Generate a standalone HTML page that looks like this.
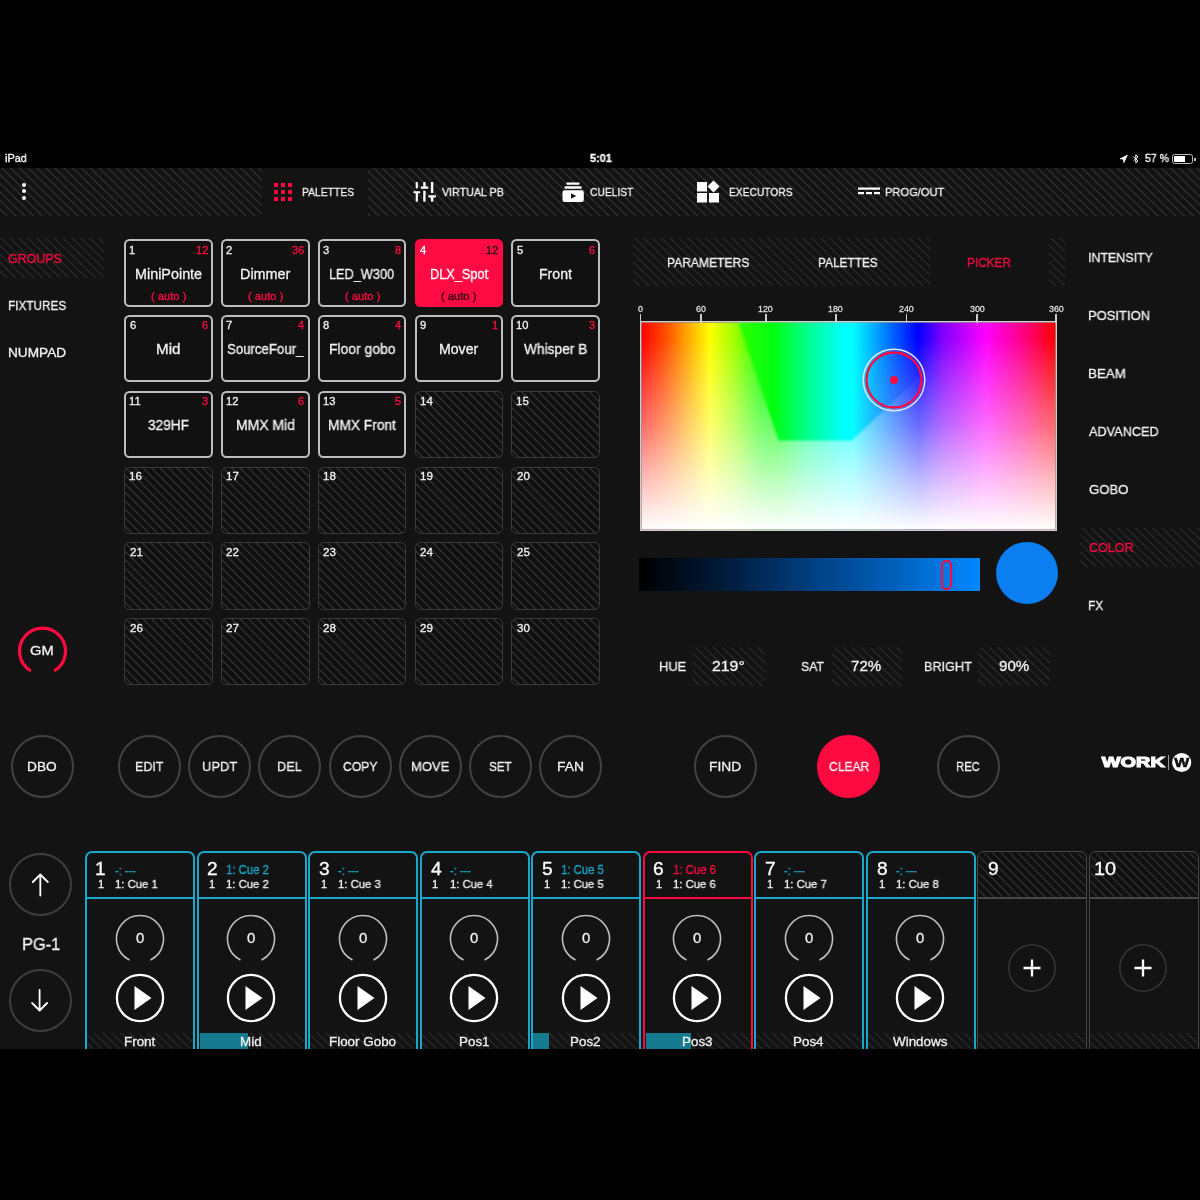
<!DOCTYPE html><html><head><meta charset='utf-8'><style>
*{margin:0;padding:0;box-sizing:border-box}
html,body{width:1200px;height:1200px;background:#000;overflow:hidden;font-family:"Liberation Sans",sans-serif;color:#eee}
.a{position:absolute}
.t{position:absolute;white-space:nowrap;line-height:1;transform-origin:0 0;will-change:transform;-webkit-text-stroke:0.3px currentColor}
.st{background:repeating-linear-gradient(44deg, #131313 0px, #131313 3.75px, #323232 4.95px, #131313 6.15px)}
.st2{background:repeating-linear-gradient(44deg, #131313 0px, #131313 3.75px, #2b2b2b 4.95px, #131313 6.15px)}
.cell{position:absolute;width:88.6px;height:67.3px;border:2px solid #bdbdbd;border-radius:5.5px;background:#111}
.ecell{position:absolute;width:88.6px;height:67.3px;border:1.5px solid #3a3a3a;border-radius:5.5px;background:repeating-linear-gradient(45deg, #101010 0px, #101010 3.60px, #363636 4.80px, #101010 6.00px)}
.btn{position:absolute;width:63px;height:63px;border:2px solid #424242;border-radius:50%}
.pb{position:absolute;top:851px;width:110px;height:220px;border:2px solid #18a8cc;border-radius:7px;overflow:hidden}
</style></head><body>
<div class="a" style="left:0;top:216px;width:1200px;height:833px;background:#131313"></div>
<div class="t" style="left:5.06px;top:153.25px;font-size:10.95px;color:#fff;transform:scaleX(0.9878)">iPad</div>
<div class="t" style="left:590.41px;top:153.19px;font-size:11.3px;color:#fff;font-weight:700;transform:scaleX(0.9680)">5:01</div>
<div class="t" style="left:1145.33px;top:153.19px;font-size:11.3px;color:#fff;transform:scaleX(0.9317)">57 %</div>
<svg class="a" style="left:1119px;top:154px" width="10" height="10"><path d="M1 4.8 L8.5 1 L4.8 8.8 L4.3 5.3 Z" fill="#fff" stroke="#fff" stroke-width="0.6" stroke-linejoin="round"/></svg>
<svg class="a" style="left:1132px;top:154px" width="9" height="10"><path d="M1.5 2.8 L6 6.8 L3.8 8.8 V0.8 L6 2.8 L1.5 6.8" fill="none" stroke="#fff" stroke-width="1"/></svg>
<div class="a" style="left:1172px;top:154px;width:21px;height:10px;border:1px solid #bbb;border-radius:2.5px"></div>
<div class="a" style="left:1174px;top:156px;width:10.5px;height:6px;background:#fff"></div>
<div class="a" style="left:1194px;top:157.5px;width:1.5px;height:3px;background:#bbb"></div>
<div class="a st" style="left:0;top:168px;width:1200px;height:48px"></div>
<div class="a" style="left:262px;top:168px;width:106px;height:48px;background:#131313"></div>
<div class="a" style="left:21.5px;top:182.5px;width:4px;height:4px;border-radius:50%;background:#fff"></div>
<div class="a" style="left:21.5px;top:189.4px;width:4px;height:4px;border-radius:50%;background:#fff"></div>
<div class="a" style="left:21.5px;top:196.3px;width:4px;height:4px;border-radius:50%;background:#fff"></div>
<div class="a" style="left:274px;top:182.5px;width:4px;height:4px;background:#ff0a40"></div>
<div class="a" style="left:281px;top:182.5px;width:4px;height:4px;background:#ff0a40"></div>
<div class="a" style="left:288px;top:182.5px;width:4px;height:4px;background:#ff0a40"></div>
<div class="a" style="left:274px;top:189.5px;width:4px;height:4px;background:#ff0a40"></div>
<div class="a" style="left:281px;top:189.5px;width:4px;height:4px;background:#ff0a40"></div>
<div class="a" style="left:288px;top:189.5px;width:4px;height:4px;background:#ff0a40"></div>
<div class="a" style="left:274px;top:196.5px;width:4px;height:4px;background:#ff0a40"></div>
<div class="a" style="left:281px;top:196.5px;width:4px;height:4px;background:#ff0a40"></div>
<div class="a" style="left:288px;top:196.5px;width:4px;height:4px;background:#ff0a40"></div>
<div class="t" style="left:301.92px;top:185.72px;font-size:11.72px;color:#f2f2f2;transform:scaleX(0.8817)">PALETTES</div>
<svg class="a" style="left:408px;top:178px" width="32" height="28"><g fill="#fff"><rect x="7.7" y="3.9" width="2.2" height="6.6" rx="0.7"/><rect x="5.3" y="13.2" width="7" height="2.1" rx="0.7"/><rect x="7.7" y="14.5" width="2.2" height="9.2" rx="0.7"/><rect x="15.2" y="4" width="2.4" height="6" rx="0.7"/><rect x="12.8" y="8.5" width="7.5" height="2.2" rx="0.7"/><rect x="15.2" y="12.8" width="2.4" height="10.9" rx="0.7"/><rect x="22.9" y="4" width="2.4" height="10.9" rx="0.7"/><rect x="20.3" y="17.3" width="7.7" height="2.2" rx="0.7"/><rect x="22.9" y="18.5" width="2.4" height="5.2" rx="0.7"/></g></svg>
<div class="t" style="left:442.41px;top:185.72px;font-size:11.72px;color:#f2f2f2;transform:scaleX(0.9126)">VIRTUAL PB</div>
<svg class="a" style="left:560px;top:180px" width="26" height="24"><g fill="#fff"><rect x="6.3" y="2.5" width="13.4" height="2.2" rx="1.1"/><rect x="4.5" y="6.3" width="17.2" height="2.4" rx="1.2"/><rect x="2.5" y="10.3" width="21.3" height="11.7" rx="2"/></g><path d="M11 13.2 L16.3 16 L11 18.8 Z" fill="#141414"/></svg>
<div class="t" style="left:590.18px;top:185.72px;font-size:11.72px;color:#f2f2f2;transform:scaleX(0.8745)">CUELIST</div>
<svg class="a" style="left:696px;top:180px" width="26" height="24"><g fill="#fff"><rect x="1" y="2" width="10" height="9.5"/><rect x="1" y="13" width="10" height="9.5"/><rect x="13" y="13" width="10" height="9.5"/><rect x="13.2" y="2.2" width="8.5" height="8.5" transform="rotate(45 17.5 6.5)"/></g></svg>
<div class="t" style="left:728.83px;top:185.72px;font-size:11.72px;color:#f2f2f2;transform:scaleX(0.8722)">EXECUTORS</div>
<svg class="a" style="left:858px;top:186px" width="24" height="10"><g fill="#fff"><rect x="0" y="1.5" width="22" height="2.2"/><rect x="0" y="6" width="6" height="2.2"/><rect x="8" y="6" width="6" height="2.2"/><rect x="16" y="6" width="6" height="2.2"/></g></svg>
<div class="t" style="left:885.05px;top:185.72px;font-size:11.72px;color:#f2f2f2;transform:scaleX(0.9477)">PROG/OUT</div>
<div class="a st2" style="left:0;top:238px;width:104px;height:40px"></div>
<div class="t" style="left:8.44px;top:251.60px;font-size:13.14px;color:#ff0a40;transform:scaleX(0.9406)">GROUPS</div>
<div class="t" style="left:8.31px;top:298.90px;font-size:13.14px;color:#f2f2f2;transform:scaleX(0.8957)">FIXTURES</div>
<div class="t" style="left:8.16px;top:346.20px;font-size:13.14px;color:#f2f2f2;transform:scaleX(1.0387)">NUMPAD</div>
<div class="cell" style="left:124.30px;top:239.30px"></div>
<div class="t" style="left:129.40px;top:244.51px;font-size:11.16px;color:#f2f2f2">1</div>
<div class="t" style="left:195.60px;top:244.54px;font-size:11.02px;color:#ff0a40">12</div>
<div class="t" style="left:134.98px;top:266.64px;font-size:14.12px;color:#f2f2f2;transform:scaleX(1.0187)">MiniPointe</div>
<div class="t" style="left:151.09px;top:292.17px;font-size:10.17px;color:#ff0a40;transform:scaleX(1.1000)">( auto )</div>
<div class="cell" style="left:221.05px;top:239.30px"></div>
<div class="t" style="left:226.35px;top:244.51px;font-size:11.16px;color:#f2f2f2">2</div>
<div class="t" style="left:292.25px;top:244.54px;font-size:11.02px;color:#ff0a40">36</div>
<div class="t" style="left:239.93px;top:266.64px;font-size:14.12px;color:#f2f2f2;transform:scaleX(1.0187)">Dimmer</div>
<div class="t" style="left:247.84px;top:292.17px;font-size:10.17px;color:#ff0a40;transform:scaleX(1.1000)">( auto )</div>
<div class="cell" style="left:317.80px;top:239.30px"></div>
<div class="t" style="left:323.30px;top:244.51px;font-size:11.16px;color:#f2f2f2">3</div>
<div class="t" style="left:395.10px;top:244.54px;font-size:11.02px;color:#ff0a40">8</div>
<div class="t" style="left:329.43px;top:266.64px;font-size:14.12px;color:#f2f2f2;transform:scaleX(0.9030)">LED_W300</div>
<div class="t" style="left:344.59px;top:292.17px;font-size:10.17px;color:#ff0a40;transform:scaleX(1.1000)">( auto )</div>
<div class="cell" style="left:414.55px;top:239.30px;background:#ff0a42;border-color:#ff0a42"></div>
<div class="t" style="left:420.25px;top:244.51px;font-size:11.16px;color:#fff">4</div>
<div class="t" style="left:485.85px;top:244.54px;font-size:11.02px;color:#1a1a1a">12</div>
<div class="t" style="left:429.56px;top:266.64px;font-size:14.12px;color:#fff;transform:scaleX(0.9019)">DLX_Spot</div>
<div class="t" style="left:441.34px;top:292.17px;font-size:10.17px;color:#2a0a10;transform:scaleX(1.1000)">( auto )</div>
<div class="cell" style="left:511.30px;top:239.30px"></div>
<div class="t" style="left:516.70px;top:244.51px;font-size:11.16px;color:#f2f2f2">5</div>
<div class="t" style="left:588.60px;top:244.54px;font-size:11.02px;color:#ff0a40">6</div>
<div class="t" style="left:538.83px;top:266.64px;font-size:14.12px;color:#f2f2f2">Front</div>
<div class="cell" style="left:124.30px;top:315.05px"></div>
<div class="t" style="left:129.60px;top:320.26px;font-size:11.16px;color:#f2f2f2">6</div>
<div class="t" style="left:201.60px;top:320.29px;font-size:11.02px;color:#ff0a40">6</div>
<div class="t" style="left:156.49px;top:342.39px;font-size:14.12px;color:#f2f2f2;transform:scaleX(1.0749)">Mid</div>
<div class="cell" style="left:221.05px;top:315.05px"></div>
<div class="t" style="left:226.35px;top:320.26px;font-size:11.16px;color:#f2f2f2">7</div>
<div class="t" style="left:298.25px;top:320.29px;font-size:11.02px;color:#ff0a40">4</div>
<div class="t" style="left:226.89px;top:342.39px;font-size:14.12px;color:#f2f2f2;transform:scaleX(0.9371)">SourceFour_</div>
<div class="cell" style="left:317.80px;top:315.05px"></div>
<div class="t" style="left:323.20px;top:320.26px;font-size:11.16px;color:#f2f2f2">8</div>
<div class="t" style="left:395.00px;top:320.29px;font-size:11.02px;color:#ff0a40">4</div>
<div class="t" style="left:328.71px;top:342.39px;font-size:14.12px;color:#f2f2f2;transform:scaleX(0.9878)">Floor gobo</div>
<div class="cell" style="left:414.55px;top:315.05px"></div>
<div class="t" style="left:419.95px;top:320.26px;font-size:11.16px;color:#f2f2f2">9</div>
<div class="t" style="left:491.95px;top:320.29px;font-size:11.02px;color:#ff0a40">1</div>
<div class="t" style="left:439.21px;top:342.39px;font-size:14.12px;color:#f2f2f2;transform:scaleX(0.9894)">Mover</div>
<div class="cell" style="left:511.30px;top:315.05px"></div>
<div class="t" style="left:516.40px;top:320.26px;font-size:11.16px;color:#f2f2f2">10</div>
<div class="t" style="left:588.60px;top:320.29px;font-size:11.02px;color:#ff0a40">3</div>
<div class="t" style="left:524.45px;top:342.39px;font-size:14.12px;color:#f2f2f2;transform:scaleX(0.9720)">Whisper B</div>
<div class="cell" style="left:124.30px;top:390.80px"></div>
<div class="t" style="left:129.40px;top:396.01px;font-size:11.16px;color:#f2f2f2">11</div>
<div class="t" style="left:201.60px;top:396.04px;font-size:11.02px;color:#ff0a40">3</div>
<div class="t" style="left:148.32px;top:418.14px;font-size:14.12px;color:#f2f2f2;transform:scaleX(0.9685)">329HF</div>
<div class="cell" style="left:221.05px;top:390.80px"></div>
<div class="t" style="left:226.15px;top:396.01px;font-size:11.16px;color:#f2f2f2">12</div>
<div class="t" style="left:298.35px;top:396.04px;font-size:11.02px;color:#ff0a40">6</div>
<div class="t" style="left:235.96px;top:418.14px;font-size:14.12px;color:#f2f2f2;transform:scaleX(0.9896)">MMX Mid</div>
<div class="cell" style="left:317.80px;top:390.80px"></div>
<div class="t" style="left:322.90px;top:396.01px;font-size:11.16px;color:#f2f2f2">13</div>
<div class="t" style="left:395.10px;top:396.04px;font-size:11.02px;color:#ff0a40">5</div>
<div class="t" style="left:327.85px;top:418.14px;font-size:14.12px;color:#f2f2f2;transform:scaleX(0.9730)">MMX Front</div>
<div class="ecell" style="left:414.55px;top:390.80px"></div>
<div class="t" style="left:419.55px;top:395.55px;font-size:11.58px;color:#f2f2f2">14</div>
<div class="ecell" style="left:511.30px;top:390.80px"></div>
<div class="t" style="left:516.30px;top:395.55px;font-size:11.58px;color:#f2f2f2">15</div>
<div class="ecell" style="left:124.30px;top:466.55px"></div>
<div class="t" style="left:129.30px;top:471.30px;font-size:11.58px;color:#f2f2f2">16</div>
<div class="ecell" style="left:221.05px;top:466.55px"></div>
<div class="t" style="left:226.05px;top:471.30px;font-size:11.58px;color:#f2f2f2">17</div>
<div class="ecell" style="left:317.80px;top:466.55px"></div>
<div class="t" style="left:322.80px;top:471.30px;font-size:11.58px;color:#f2f2f2">18</div>
<div class="ecell" style="left:414.55px;top:466.55px"></div>
<div class="t" style="left:419.55px;top:471.30px;font-size:11.58px;color:#f2f2f2">19</div>
<div class="ecell" style="left:511.30px;top:466.55px"></div>
<div class="t" style="left:516.60px;top:471.30px;font-size:11.58px;color:#f2f2f2">20</div>
<div class="ecell" style="left:124.30px;top:542.30px"></div>
<div class="t" style="left:129.60px;top:547.05px;font-size:11.58px;color:#f2f2f2">21</div>
<div class="ecell" style="left:221.05px;top:542.30px"></div>
<div class="t" style="left:226.35px;top:547.05px;font-size:11.58px;color:#f2f2f2">22</div>
<div class="ecell" style="left:317.80px;top:542.30px"></div>
<div class="t" style="left:323.10px;top:547.05px;font-size:11.58px;color:#f2f2f2">23</div>
<div class="ecell" style="left:414.55px;top:542.30px"></div>
<div class="t" style="left:419.85px;top:547.05px;font-size:11.58px;color:#f2f2f2">24</div>
<div class="ecell" style="left:511.30px;top:542.30px"></div>
<div class="t" style="left:516.60px;top:547.05px;font-size:11.58px;color:#f2f2f2">25</div>
<div class="ecell" style="left:124.30px;top:618.05px"></div>
<div class="t" style="left:129.60px;top:622.80px;font-size:11.58px;color:#f2f2f2">26</div>
<div class="ecell" style="left:221.05px;top:618.05px"></div>
<div class="t" style="left:226.35px;top:622.80px;font-size:11.58px;color:#f2f2f2">27</div>
<div class="ecell" style="left:317.80px;top:618.05px"></div>
<div class="t" style="left:323.10px;top:622.80px;font-size:11.58px;color:#f2f2f2">28</div>
<div class="ecell" style="left:414.55px;top:618.05px"></div>
<div class="t" style="left:419.85px;top:622.80px;font-size:11.58px;color:#f2f2f2">29</div>
<div class="ecell" style="left:511.30px;top:618.05px"></div>
<div class="t" style="left:516.70px;top:622.80px;font-size:11.58px;color:#f2f2f2">30</div>
<svg class="a" style="left:0;top:600px" width="90" height="90"><path d="M 30.8 70.9 A 23 23 0 1 1 54.2 70.9" fill="none" stroke="#ff0a40" stroke-width="3.2"/></svg>
<div class="t" style="left:30.38px;top:644.35px;font-size:13.42px;color:#f2f2f2;transform:scaleX(1.0960)">GM</div>
<div class="a st2" style="left:632.5px;top:238px;width:432.5px;height:48px"></div>
<div class="a" style="left:929.5px;top:238px;width:119.5px;height:48px;background:#131313"></div>
<div class="t" style="left:666.61px;top:255.85px;font-size:13.42px;color:#f2f2f2;transform:scaleX(0.9008)">PARAMETERS</div>
<div class="t" style="left:818.33px;top:255.85px;font-size:13.42px;color:#f2f2f2;transform:scaleX(0.8847)">PALETTES</div>
<div class="t" style="left:967.03px;top:255.85px;font-size:13.42px;color:#ff0a40;transform:scaleX(0.8817)">PICKER</div>
<div class="a" style="left:639.75px;top:314px;width:1.5px;height:9px;background:#ccc"></div>
<div class="t" style="left:638.05px;top:305.08px;font-size:8.9px;color:#ddd">0</div>
<div class="a" style="left:700.25px;top:314px;width:1.5px;height:9px;background:#ccc"></div>
<div class="t" style="left:696.00px;top:305.08px;font-size:8.9px;color:#ddd">60</div>
<div class="a" style="left:765.25px;top:314px;width:1.5px;height:9px;background:#ccc"></div>
<div class="t" style="left:758.40px;top:305.08px;font-size:8.9px;color:#ddd">120</div>
<div class="a" style="left:835.25px;top:314px;width:1.5px;height:9px;background:#ccc"></div>
<div class="t" style="left:828.40px;top:305.08px;font-size:8.9px;color:#ddd">180</div>
<div class="a" style="left:905.85px;top:314px;width:1.5px;height:9px;background:#ccc"></div>
<div class="t" style="left:899.15px;top:305.08px;font-size:8.9px;color:#ddd">240</div>
<div class="a" style="left:976.45px;top:314px;width:1.5px;height:9px;background:#ccc"></div>
<div class="t" style="left:969.80px;top:305.08px;font-size:8.9px;color:#ddd">300</div>
<div class="a" style="left:1055.25px;top:314px;width:1.5px;height:9px;background:#ccc"></div>
<div class="t" style="left:1048.60px;top:305.08px;font-size:8.9px;color:#ddd">360</div>
<svg class="a" style="left:630px;top:310px" width="440" height="230"><defs><linearGradient id="hue" gradientUnits="userSpaceOnUse" x1="11.5" y1="0" x2="425.5" y2="0"><stop offset="0%" stop-color="#ff0000"/><stop offset="5.9%" stop-color="#ff5000"/><stop offset="16.5%" stop-color="#ffff00"/><stop offset="22.8%" stop-color="#99ff00"/><stop offset="29%" stop-color="#10ff00"/><stop offset="33%" stop-color="#00ff00"/><stop offset="39.7%" stop-color="#00ff88"/><stop offset="49%" stop-color="#00ffff"/><stop offset="51%" stop-color="#00ffff"/><stop offset="66.8%" stop-color="#0000ff"/><stop offset="72.8%" stop-color="#8000ff"/><stop offset="83.2%" stop-color="#ff00ff"/><stop offset="92.5%" stop-color="#ff0080"/><stop offset="100%" stop-color="#ff0000"/></linearGradient><linearGradient id="hue2" gradientUnits="userSpaceOnUse" x1="11.5" y1="0" x2="425.5" y2="0"><stop offset="0%" stop-color="#ff0000"/><stop offset="5.9%" stop-color="#ff5000"/><stop offset="16.5%" stop-color="#ffff00"/><stop offset="23.4%" stop-color="#a0ff00"/><stop offset="23.8%" stop-color="#30ff00"/><stop offset="32%" stop-color="#00ff10"/><stop offset="39.7%" stop-color="#00ff88"/><stop offset="49%" stop-color="#00ffff"/><stop offset="51%" stop-color="#00ffff"/><stop offset="66.8%" stop-color="#0000ff"/><stop offset="72.8%" stop-color="#8000ff"/><stop offset="83.2%" stop-color="#ff00ff"/><stop offset="92.5%" stop-color="#ff0080"/><stop offset="100%" stop-color="#ff0000"/></linearGradient><linearGradient id="wht" x1="0" y1="0" x2="0" y2="1"><stop offset="0%" stop-color="#fff" stop-opacity="0"/><stop offset="8%" stop-color="#fff" stop-opacity="0"/><stop offset="50%" stop-color="#fff" stop-opacity="0.42"/><stop offset="75%" stop-color="#fff" stop-opacity="0.72"/><stop offset="100%" stop-color="#fff" stop-opacity="1"/></linearGradient><filter id="bl" x="-5%" y="-5%" width="110%" height="110%"><feGaussianBlur stdDeviation="0.8"/></filter><linearGradient id="mg" gradientUnits="userSpaceOnUse" x1="218" y1="0" x2="295" y2="0"><stop offset="0" stop-color="#fff"/><stop offset="1" stop-color="#000"/></linearGradient><mask id="mk" maskUnits="userSpaceOnUse" x="0" y="0" width="440" height="230"><rect x="0" y="0" width="440" height="230" fill="url(#mg)"/></mask></defs><rect x="11.5" y="12.5" width="414.0" height="207.0" fill="url(#hue)"/><rect x="11.5" y="12.5" width="414.0" height="207.0" fill="url(#wht)"/><path d="M108.70000000000005 12.5 L305 12.5 L305 52 L222 130.5 L148.70000000000005 130.5 Z" fill="url(#hue2)" filter="url(#bl)" mask="url(#mk)"/><rect x="10.75" y="11.75" width="415.5" height="208.5" fill="none" stroke="#cfcfcf" stroke-width="1.5"/></svg>
<svg class="a" style="left:861.7px;top:347.7px" width="64" height="64"><circle cx="32" cy="32" r="30.8" fill="none" stroke="#e2e8ff" stroke-width="1.4"/><circle cx="32" cy="32" r="27.5" fill="none" stroke="#ff0a40" stroke-width="2.3"/><circle cx="32" cy="32" r="4" fill="#ff0a40"/></svg>
<div class="a" style="left:639px;top:558px;width:341px;height:33px;background:linear-gradient(to right,#000 0%,#001b3a 25%,#003e7e 50%,#0060bc 75%,#0088ff 100%)"></div>
<div class="a" style="left:940.5px;top:559.5px;width:11.5px;height:30px;border:2px solid #ff0a40;border-radius:5px"></div>
<div class="a" style="left:996px;top:542px;width:62px;height:62px;border-radius:50%;background:#0b7ef0"></div>
<div class="a st2" style="left:692.5px;top:646.5px;width:72px;height:39px"></div>
<div class="t" style="left:658.54px;top:660.05px;font-size:13.42px;color:#f2f2f2;transform:scaleX(0.9625)">HUE</div>
<div class="t" style="left:711.55px;top:659.25px;font-size:14.69px;color:#f2f2f2;transform:scaleX(1.0764)">219°</div>
<div class="a st2" style="left:831.8px;top:646.5px;width:70px;height:39px"></div>
<div class="t" style="left:801.15px;top:660.05px;font-size:13.42px;color:#f2f2f2;transform:scaleX(0.9132)">SAT</div>
<div class="t" style="left:851.08px;top:659.25px;font-size:14.69px;color:#f2f2f2;transform:scaleX(1.0284)">72%</div>
<div class="a st2" style="left:977.8px;top:646.5px;width:72px;height:39px"></div>
<div class="t" style="left:924.26px;top:660.05px;font-size:13.42px;color:#f2f2f2;transform:scaleX(0.9432)">BRIGHT</div>
<div class="t" style="left:998.78px;top:659.25px;font-size:14.69px;color:#f2f2f2;transform:scaleX(1.0284)">90%</div>
<div class="a st2" style="left:1080px;top:528px;width:120px;height:39px"></div>
<div class="t" style="left:1088.20px;top:251.13px;font-size:13.56px;color:#f2f2f2;transform:scaleX(0.9163)">INTENSITY</div>
<div class="t" style="left:1088.25px;top:309.13px;font-size:13.56px;color:#f2f2f2;transform:scaleX(0.9585)">POSITION</div>
<div class="t" style="left:1088.22px;top:367.13px;font-size:13.56px;color:#f2f2f2;transform:scaleX(0.9862)">BEAM</div>
<div class="t" style="left:1089.21px;top:425.13px;font-size:13.56px;color:#f2f2f2;transform:scaleX(0.9375)">ADVANCED</div>
<div class="t" style="left:1088.62px;top:483.13px;font-size:13.56px;color:#f2f2f2;transform:scaleX(0.9721)">GOBO</div>
<div class="t" style="left:1088.65px;top:541.13px;font-size:13.56px;color:#ff0a40;transform:scaleX(0.9252)">COLOR</div>
<div class="t" style="left:1088.33px;top:599.13px;font-size:13.56px;color:#f2f2f2;transform:scaleX(0.8805)">FX</div>
<div class="btn" style="left:10.50px;top:734.5px"></div>
<div class="t" style="left:26.90px;top:759.61px;font-size:13.7px;color:#f2f2f2">DBO</div>
<div class="btn" style="left:118.00px;top:734.5px"></div>
<div class="t" style="left:134.90px;top:759.61px;font-size:13.7px;color:#f2f2f2;transform:scaleX(0.9128)">EDIT</div>
<div class="btn" style="left:188.20px;top:734.5px"></div>
<div class="t" style="left:201.76px;top:759.61px;font-size:13.7px;color:#f2f2f2;transform:scaleX(0.9444)">UPDT</div>
<div class="btn" style="left:258.40px;top:734.5px"></div>
<div class="t" style="left:277.23px;top:759.61px;font-size:13.7px;color:#f2f2f2;transform:scaleX(0.9283)">DEL</div>
<div class="btn" style="left:328.60px;top:734.5px"></div>
<div class="t" style="left:342.73px;top:759.61px;font-size:13.7px;color:#f2f2f2;transform:scaleX(0.8862)">COPY</div>
<div class="btn" style="left:398.80px;top:734.5px"></div>
<div class="t" style="left:410.88px;top:759.61px;font-size:13.7px;color:#f2f2f2;transform:scaleX(0.9496)">MOVE</div>
<div class="btn" style="left:469.00px;top:734.5px"></div>
<div class="t" style="left:489.12px;top:759.61px;font-size:13.7px;color:#f2f2f2;transform:scaleX(0.8463)">SET</div>
<div class="btn" style="left:539.20px;top:734.5px"></div>
<div class="t" style="left:557.21px;top:759.61px;font-size:13.7px;color:#f2f2f2;transform:scaleX(1.0143)">FAN</div>
<div class="btn" style="left:694.00px;top:734.5px"></div>
<div class="t" style="left:709.19px;top:759.61px;font-size:13.7px;color:#f2f2f2;transform:scaleX(1.0066)">FIND</div>
<div class="btn" style="left:817.30px;top:734.5px;background:#ff0a40;border-color:#ff0a40"></div>
<div class="t" style="left:828.68px;top:759.61px;font-size:13.7px;color:#f2f2f2;transform:scaleX(0.8804)">CLEAR</div>
<div class="btn" style="left:936.50px;top:734.5px"></div>
<div class="t" style="left:955.84px;top:759.61px;font-size:13.7px;color:#f2f2f2;transform:scaleX(0.8242)">REC</div>
<div class="a" style="left:1101px;top:754.2px;width:65px;height:14px;overflow:visible"><svg width="66" height="16" style="position:absolute;left:0;top:0;will-change:transform"><text x="0.8" y="13.2" font-family="Liberation Sans" font-weight="700" font-size="14.6" fill="#fff" stroke="#fff" stroke-width="1.1" textLength="63" lengthAdjust="spacingAndGlyphs">WORK</text></svg></div>
<div class="a" style="left:1167.6px;top:755px;width:1.4px;height:15px;background:#9a9a9a"></div>
<svg class="a" style="left:1170px;top:751px;will-change:transform" width="24" height="24"><circle cx="11.7" cy="11.5" r="9.6" fill="#fff"/><text x="11.7" y="16.2" text-anchor="middle" font-family="Liberation Sans" font-weight="700" font-size="13.5" fill="#111" stroke="#111" stroke-width="0.6" textLength="15" lengthAdjust="spacingAndGlyphs">W</text></svg>
<div class="a" style="left:8.5px;top:852.5px;width:63px;height:63px;border:2px solid #3e3e3e;border-radius:50%"></div>
<div class="a" style="left:8.5px;top:969.0px;width:63px;height:63px;border:2px solid #3e3e3e;border-radius:50%"></div>
<svg class="a" style="left:0;top:850px" width="80" height="190"><g fill="none" stroke="#fff" stroke-width="1.8" stroke-linecap="round" stroke-linejoin="round"><path d="M40.3 25.5 V45.5 M32.8 32 L40.3 24.5 L47.8 32"/><path d="M39.6 140 V159.5 M32.1 153 L39.6 160.5 L47.1 153"/></g></svg>
<div class="t" style="left:22.00px;top:936.79px;font-size:16.95px;color:#f2f2f2;transform:scaleX(0.9678)">PG-1</div>
<div class="pb" style="left:85.20px;border-color:#18a8cc"></div>
<div class="a" style="left:85.20px;top:897.2px;width:110px;height:2.2px;background:#18a8cc"></div>
<div class="a st2" style="left:87.20px;top:1032.5px;width:106px;height:17px"></div>
<div class="t" style="left:95.20px;top:858.93px;font-size:19.21px;color:#fff">1</div>
<div class="t" style="left:115.25px;top:865.01px;font-size:12.43px;color:#18a8cc;transform:scaleX(0.8929)">-: ---</div>
<div class="t" style="left:97.90px;top:879.31px;font-size:11.16px;color:#f2f2f2">1</div>
<div class="t" style="left:114.91px;top:879.17px;font-size:11.44px;color:#f2f2f2;transform:scaleX(0.9880)">1: Cue 1</div>
<svg class="a" style="left:113.70px;top:912.8px" width="52" height="52"><path d="M 15.5 47 A 23.5 23.5 0 1 1 36.5 47" fill="none" stroke="#bdbdbd" stroke-width="1.6"/></svg>
<div class="t" style="left:135.61px;top:931.20px;font-size:14.97px;color:#f2f2f2;transform:scaleX(0.9859)">0</div>
<svg class="a" style="left:113.70px;top:972.3px" width="52" height="52"><circle cx="26" cy="26" r="23.1" fill="none" stroke="#fff" stroke-width="2.3"/><path d="M20.5 14 L37.5 26 L20.5 38 Z" fill="#fff"/></svg>
<div class="t" style="left:123.55px;top:1035.15px;font-size:13.42px;color:#f2f2f2">Front</div>
<div class="pb" style="left:196.73px;border-color:#18a8cc"></div>
<div class="a" style="left:196.73px;top:897.2px;width:110px;height:2.2px;background:#18a8cc"></div>
<div class="a st2" style="left:198.73px;top:1032.5px;width:106px;height:17px"></div>
<div class="a" style="left:199.5px;top:1032.5px;width:48.0px;height:17px;background:#167a8e"></div>
<div class="t" style="left:207.23px;top:858.93px;font-size:19.21px;color:#fff">2</div>
<div class="t" style="left:226.41px;top:863.61px;font-size:12.43px;color:#18a8cc;transform:scaleX(0.9143)">1: Cue 2</div>
<div class="t" style="left:209.43px;top:879.31px;font-size:11.16px;color:#f2f2f2">1</div>
<div class="t" style="left:226.44px;top:879.17px;font-size:11.44px;color:#f2f2f2;transform:scaleX(0.9880)">1: Cue 2</div>
<svg class="a" style="left:225.23px;top:912.8px" width="52" height="52"><path d="M 15.5 47 A 23.5 23.5 0 1 1 36.5 47" fill="none" stroke="#bdbdbd" stroke-width="1.6"/></svg>
<div class="t" style="left:247.14px;top:931.20px;font-size:14.97px;color:#f2f2f2;transform:scaleX(0.9859)">0</div>
<svg class="a" style="left:225.23px;top:972.3px" width="52" height="52"><circle cx="26" cy="26" r="23.1" fill="none" stroke="#fff" stroke-width="2.3"/><path d="M20.5 14 L37.5 26 L20.5 38 Z" fill="#fff"/></svg>
<div class="t" style="left:240.33px;top:1035.15px;font-size:13.42px;color:#f2f2f2">Mid</div>
<div class="pb" style="left:308.26px;border-color:#18a8cc"></div>
<div class="a" style="left:308.26px;top:897.2px;width:110px;height:2.2px;background:#18a8cc"></div>
<div class="a st2" style="left:310.26px;top:1032.5px;width:106px;height:17px"></div>
<div class="t" style="left:319.06px;top:858.93px;font-size:19.21px;color:#fff">3</div>
<div class="t" style="left:338.31px;top:865.01px;font-size:12.43px;color:#18a8cc;transform:scaleX(0.8929)">-: ---</div>
<div class="t" style="left:320.96px;top:879.31px;font-size:11.16px;color:#f2f2f2">1</div>
<div class="t" style="left:337.97px;top:879.17px;font-size:11.44px;color:#f2f2f2;transform:scaleX(0.9880)">1: Cue 3</div>
<svg class="a" style="left:336.76px;top:912.8px" width="52" height="52"><path d="M 15.5 47 A 23.5 23.5 0 1 1 36.5 47" fill="none" stroke="#bdbdbd" stroke-width="1.6"/></svg>
<div class="t" style="left:358.67px;top:931.20px;font-size:14.97px;color:#f2f2f2;transform:scaleX(0.9859)">0</div>
<svg class="a" style="left:336.76px;top:972.3px" width="52" height="52"><circle cx="26" cy="26" r="23.1" fill="none" stroke="#fff" stroke-width="2.3"/><path d="M20.5 14 L37.5 26 L20.5 38 Z" fill="#fff"/></svg>
<div class="t" style="left:328.91px;top:1035.15px;font-size:13.42px;color:#f2f2f2">Floor Gobo</div>
<div class="pb" style="left:419.79px;border-color:#18a8cc"></div>
<div class="a" style="left:419.79px;top:897.2px;width:110px;height:2.2px;background:#18a8cc"></div>
<div class="a st2" style="left:421.79px;top:1032.5px;width:106px;height:17px"></div>
<div class="t" style="left:430.89px;top:858.93px;font-size:19.21px;color:#fff">4</div>
<div class="t" style="left:449.84px;top:865.01px;font-size:12.43px;color:#18a8cc;transform:scaleX(0.8929)">-: ---</div>
<div class="t" style="left:432.49px;top:879.31px;font-size:11.16px;color:#f2f2f2">1</div>
<div class="t" style="left:449.51px;top:879.17px;font-size:11.44px;color:#f2f2f2;transform:scaleX(0.9833)">1: Cue 4</div>
<svg class="a" style="left:448.29px;top:912.8px" width="52" height="52"><path d="M 15.5 47 A 23.5 23.5 0 1 1 36.5 47" fill="none" stroke="#bdbdbd" stroke-width="1.6"/></svg>
<div class="t" style="left:470.20px;top:931.20px;font-size:14.97px;color:#f2f2f2;transform:scaleX(0.9859)">0</div>
<svg class="a" style="left:448.29px;top:972.3px" width="52" height="52"><circle cx="26" cy="26" r="23.1" fill="none" stroke="#fff" stroke-width="2.3"/><path d="M20.5 14 L37.5 26 L20.5 38 Z" fill="#fff"/></svg>
<div class="t" style="left:458.79px;top:1035.15px;font-size:13.42px;color:#f2f2f2">Pos1</div>
<div class="pb" style="left:531.32px;border-color:#18a8cc"></div>
<div class="a" style="left:531.32px;top:897.2px;width:110px;height:2.2px;background:#18a8cc"></div>
<div class="a st2" style="left:533.32px;top:1032.5px;width:106px;height:17px"></div>
<div class="a" style="left:533px;top:1032.5px;width:16px;height:17px;background:#167a8e"></div>
<div class="t" style="left:542.02px;top:858.93px;font-size:19.21px;color:#fff">5</div>
<div class="t" style="left:561.00px;top:863.61px;font-size:12.43px;color:#18a8cc;transform:scaleX(0.9123)">1: Cue 5</div>
<div class="t" style="left:544.02px;top:879.31px;font-size:11.16px;color:#f2f2f2">1</div>
<div class="t" style="left:561.03px;top:879.17px;font-size:11.44px;color:#f2f2f2;transform:scaleX(0.9857)">1: Cue 5</div>
<svg class="a" style="left:559.82px;top:912.8px" width="52" height="52"><path d="M 15.5 47 A 23.5 23.5 0 1 1 36.5 47" fill="none" stroke="#bdbdbd" stroke-width="1.6"/></svg>
<div class="t" style="left:581.73px;top:931.20px;font-size:14.97px;color:#f2f2f2;transform:scaleX(0.9859)">0</div>
<svg class="a" style="left:559.82px;top:972.3px" width="52" height="52"><circle cx="26" cy="26" r="23.1" fill="none" stroke="#fff" stroke-width="2.3"/><path d="M20.5 14 L37.5 26 L20.5 38 Z" fill="#fff"/></svg>
<div class="t" style="left:570.32px;top:1035.15px;font-size:13.42px;color:#f2f2f2">Pos2</div>
<div class="pb" style="left:642.85px;border-color:#ff0a40"></div>
<div class="a" style="left:642.85px;top:897.2px;width:110px;height:2.2px;background:#ff0a40"></div>
<div class="a st2" style="left:644.85px;top:1032.5px;width:106px;height:17px"></div>
<div class="a" style="left:645.5px;top:1032.5px;width:45.5px;height:17px;background:#167a8e"></div>
<div class="t" style="left:653.35px;top:858.93px;font-size:19.21px;color:#fff">6</div>
<div class="t" style="left:672.53px;top:863.61px;font-size:12.43px;color:#ff0a40;transform:scaleX(0.9143)">1: Cue 6</div>
<div class="t" style="left:655.55px;top:879.31px;font-size:11.16px;color:#f2f2f2">1</div>
<div class="t" style="left:672.56px;top:879.17px;font-size:11.44px;color:#f2f2f2;transform:scaleX(0.9880)">1: Cue 6</div>
<svg class="a" style="left:671.35px;top:912.8px" width="52" height="52"><path d="M 15.5 47 A 23.5 23.5 0 1 1 36.5 47" fill="none" stroke="#bdbdbd" stroke-width="1.6"/></svg>
<div class="t" style="left:693.26px;top:931.20px;font-size:14.97px;color:#f2f2f2;transform:scaleX(0.9859)">0</div>
<svg class="a" style="left:671.35px;top:972.3px" width="52" height="52"><circle cx="26" cy="26" r="23.1" fill="none" stroke="#fff" stroke-width="2.3"/><path d="M20.5 14 L37.5 26 L20.5 38 Z" fill="#fff"/></svg>
<div class="t" style="left:681.80px;top:1035.15px;font-size:13.42px;color:#f2f2f2">Pos3</div>
<div class="pb" style="left:754.38px;border-color:#18a8cc"></div>
<div class="a" style="left:754.38px;top:897.2px;width:110px;height:2.2px;background:#18a8cc"></div>
<div class="a st2" style="left:756.38px;top:1032.5px;width:106px;height:17px"></div>
<div class="t" style="left:764.88px;top:858.93px;font-size:19.21px;color:#fff">7</div>
<div class="t" style="left:784.43px;top:865.01px;font-size:12.43px;color:#18a8cc;transform:scaleX(0.8929)">-: ---</div>
<div class="t" style="left:767.08px;top:879.31px;font-size:11.16px;color:#f2f2f2">1</div>
<div class="t" style="left:784.09px;top:879.17px;font-size:11.44px;color:#f2f2f2;transform:scaleX(0.9880)">1: Cue 7</div>
<svg class="a" style="left:782.88px;top:912.8px" width="52" height="52"><path d="M 15.5 47 A 23.5 23.5 0 1 1 36.5 47" fill="none" stroke="#bdbdbd" stroke-width="1.6"/></svg>
<div class="t" style="left:804.79px;top:931.20px;font-size:14.97px;color:#f2f2f2;transform:scaleX(0.9859)">0</div>
<svg class="a" style="left:782.88px;top:972.3px" width="52" height="52"><circle cx="26" cy="26" r="23.1" fill="none" stroke="#fff" stroke-width="2.3"/><path d="M20.5 14 L37.5 26 L20.5 38 Z" fill="#fff"/></svg>
<div class="t" style="left:793.23px;top:1035.15px;font-size:13.42px;color:#f2f2f2">Pos4</div>
<div class="pb" style="left:865.91px;border-color:#18a8cc"></div>
<div class="a" style="left:865.91px;top:897.2px;width:110px;height:2.2px;background:#18a8cc"></div>
<div class="a st2" style="left:867.91px;top:1032.5px;width:106px;height:17px"></div>
<div class="t" style="left:876.61px;top:858.93px;font-size:19.21px;color:#fff">8</div>
<div class="t" style="left:895.96px;top:865.01px;font-size:12.43px;color:#18a8cc;transform:scaleX(0.8929)">-: ---</div>
<div class="t" style="left:878.61px;top:879.31px;font-size:11.16px;color:#f2f2f2">1</div>
<div class="t" style="left:895.62px;top:879.17px;font-size:11.44px;color:#f2f2f2;transform:scaleX(0.9880)">1: Cue 8</div>
<svg class="a" style="left:894.41px;top:912.8px" width="52" height="52"><path d="M 15.5 47 A 23.5 23.5 0 1 1 36.5 47" fill="none" stroke="#bdbdbd" stroke-width="1.6"/></svg>
<div class="t" style="left:916.32px;top:931.20px;font-size:14.97px;color:#f2f2f2;transform:scaleX(0.9859)">0</div>
<svg class="a" style="left:894.41px;top:972.3px" width="52" height="52"><circle cx="26" cy="26" r="23.1" fill="none" stroke="#fff" stroke-width="2.3"/><path d="M20.5 14 L37.5 26 L20.5 38 Z" fill="#fff"/></svg>
<div class="t" style="left:893.36px;top:1035.15px;font-size:13.42px;color:#f2f2f2">Windows</div>
<div class="pb" style="left:977.44px;border-color:#474747;border-width:1.8px"></div>
<div class="a" style="left:979.44px;top:853px;width:106px;height:44px;border-radius:5px 5px 0 0;background:repeating-linear-gradient(45deg, #101010 0px, #101010 3.60px, #333333 4.80px, #101010 6.00px)"></div>
<div class="a" style="left:977.44px;top:897.2px;width:110px;height:1.8px;background:#474747"></div>
<div class="a st2" style="left:979.44px;top:1032.5px;width:106px;height:17px"></div>
<div class="t" style="left:988.04px;top:858.93px;font-size:19.21px;color:#fff">9</div>
<svg class="a" style="left:1005.94px;top:941.5px" width="52" height="52"><circle cx="26" cy="26" r="23.2" fill="none" stroke="#353535" stroke-width="1.6"/><path d="M26 17.5 V34.5 M17.5 26 H34.5" stroke="#fff" stroke-width="2.3"/></svg>
<div class="pb" style="left:1088.97px;border-color:#474747;border-width:1.8px"></div>
<div class="a" style="left:1090.97px;top:853px;width:106px;height:44px;border-radius:5px 5px 0 0;background:repeating-linear-gradient(45deg, #101010 0px, #101010 3.60px, #333333 4.80px, #101010 6.00px)"></div>
<div class="a" style="left:1088.97px;top:897.2px;width:110px;height:1.8px;background:#474747"></div>
<div class="a st2" style="left:1090.97px;top:1032.5px;width:106px;height:17px"></div>
<div class="t" style="left:1093.62px;top:858.93px;font-size:19.21px;color:#fff;transform:scaleX(1.0366)">10</div>
<svg class="a" style="left:1117.47px;top:941.5px" width="52" height="52"><circle cx="26" cy="26" r="23.2" fill="none" stroke="#353535" stroke-width="1.6"/><path d="M26 17.5 V34.5 M17.5 26 H34.5" stroke="#fff" stroke-width="2.3"/></svg>
<div class="a" style="left:0;top:1049px;width:1200px;height:151px;background:#000"></div>
</body></html>
